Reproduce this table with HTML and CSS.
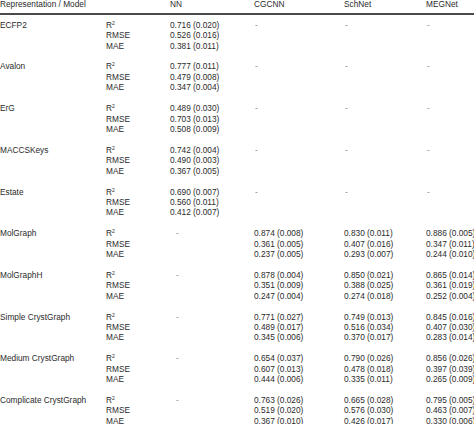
FILE: index.html
```html
<!DOCTYPE html>
<html>
<head>
<meta charset="utf-8">
<link rel="stylesheet" href="styles.css">
</head>
<body>
<div class="table">
  <div class="row head">
    <div class="c c1">Representation / Model</div>
    <div class="c c2"></div>
    <div class="c c3">NN</div>
    <div class="c c4">CGCNN</div>
    <div class="c c5">SchNet</div>
    <div class="c c6">MEGNet</div>
  </div>
  <div class="rule"></div>
  <div class="body">
    <div class="row group">
      <div class="c c1">ECFP2</div>
      <div class="c c2"><div>R<sup>2</sup></div><div>RMSE</div><div>MAE</div></div>
      <div class="c c3"><div>0.716 (0.020)</div><div>0.526 (0.016)</div><div>0.381 (0.011)</div></div>
      <div class="c c4"><div class="dash">-</div></div>
      <div class="c c5"><div class="dash">-</div></div>
      <div class="c c6"><div class="dash">-</div></div>
    </div>
    <div class="row group">
      <div class="c c1">Avalon</div>
      <div class="c c2"><div>R<sup>2</sup></div><div>RMSE</div><div>MAE</div></div>
      <div class="c c3"><div>0.777 (0.011)</div><div>0.479 (0.008)</div><div>0.347 (0.004)</div></div>
      <div class="c c4"><div class="dash">-</div></div>
      <div class="c c5"><div class="dash">-</div></div>
      <div class="c c6"><div class="dash">-</div></div>
    </div>
    <div class="row group">
      <div class="c c1">ErG</div>
      <div class="c c2"><div>R<sup>2</sup></div><div>RMSE</div><div>MAE</div></div>
      <div class="c c3"><div>0.489 (0.030)</div><div>0.703 (0.013)</div><div>0.508 (0.009)</div></div>
      <div class="c c4"><div class="dash">-</div></div>
      <div class="c c5"><div class="dash">-</div></div>
      <div class="c c6"><div class="dash">-</div></div>
    </div>
    <div class="row group">
      <div class="c c1">MACCSKeys</div>
      <div class="c c2"><div>R<sup>2</sup></div><div>RMSE</div><div>MAE</div></div>
      <div class="c c3"><div>0.742 (0.004)</div><div>0.490 (0.003)</div><div>0.367 (0.005)</div></div>
      <div class="c c4"><div class="dash">-</div></div>
      <div class="c c5"><div class="dash">-</div></div>
      <div class="c c6"><div class="dash">-</div></div>
    </div>
    <div class="row group">
      <div class="c c1">Estate</div>
      <div class="c c2"><div>R<sup>2</sup></div><div>RMSE</div><div>MAE</div></div>
      <div class="c c3"><div>0.690 (0.007)</div><div>0.560 (0.011)</div><div>0.412 (0.007)</div></div>
      <div class="c c4"><div class="dash">-</div></div>
      <div class="c c5"><div class="dash">-</div></div>
      <div class="c c6"><div class="dash">-</div></div>
    </div>
    <div class="row group">
      <div class="c c1">MolGraph</div>
      <div class="c c2"><div>R<sup>2</sup></div><div>RMSE</div><div>MAE</div></div>
      <div class="c c3"><div class="dash nn">-</div></div>
      <div class="c c4"><div>0.874 (0.008)</div><div>0.361 (0.005)</div><div>0.237 (0.005)</div></div>
      <div class="c c5"><div>0.830 (0.011)</div><div>0.407 (0.016)</div><div>0.293 (0.007)</div></div>
      <div class="c c6"><div>0.886 (0.005)</div><div>0.347 (0.011)</div><div>0.244 (0.010)</div></div>
    </div>
    <div class="row group">
      <div class="c c1">MolGraphH</div>
      <div class="c c2"><div>R<sup>2</sup></div><div>RMSE</div><div>MAE</div></div>
      <div class="c c3"><div class="dash nn">-</div></div>
      <div class="c c4"><div>0.878 (0.004)</div><div>0.351 (0.009)</div><div>0.247 (0.004)</div></div>
      <div class="c c5"><div>0.850 (0.021)</div><div>0.388 (0.025)</div><div>0.274 (0.018)</div></div>
      <div class="c c6"><div>0.865 (0.014)</div><div>0.361 (0.019)</div><div>0.252 (0.004)</div></div>
    </div>
    <div class="row group">
      <div class="c c1">Simple CrystGraph</div>
      <div class="c c2"><div>R<sup>2</sup></div><div>RMSE</div><div>MAE</div></div>
      <div class="c c3"><div class="dash nn">-</div></div>
      <div class="c c4"><div>0.771 (0.027)</div><div>0.489 (0.017)</div><div>0.345 (0.006)</div></div>
      <div class="c c5"><div>0.749 (0.013)</div><div>0.516 (0.034)</div><div>0.370 (0.017)</div></div>
      <div class="c c6"><div>0.845 (0.016)</div><div>0.407 (0.030)</div><div>0.283 (0.014)</div></div>
    </div>
    <div class="row group">
      <div class="c c1">Medium CrystGraph</div>
      <div class="c c2"><div>R<sup>2</sup></div><div>RMSE</div><div>MAE</div></div>
      <div class="c c3"><div class="dash nn">-</div></div>
      <div class="c c4"><div>0.654 (0.037)</div><div>0.607 (0.013)</div><div>0.444 (0.006)</div></div>
      <div class="c c5"><div>0.790 (0.026)</div><div>0.478 (0.018)</div><div>0.335 (0.011)</div></div>
      <div class="c c6"><div>0.856 (0.026)</div><div>0.397 (0.039)</div><div>0.265 (0.009)</div></div>
    </div>
    <div class="row group">
      <div class="c c1">Complicate CrystGraph</div>
      <div class="c c2"><div>R<sup>2</sup></div><div>RMSE</div><div>MAE</div></div>
      <div class="c c3"><div class="dash nn">-</div></div>
      <div class="c c4"><div>0.763 (0.026)</div><div>0.519 (0.020)</div><div>0.367 (0.010)</div></div>
      <div class="c c5"><div>0.665 (0.028)</div><div>0.576 (0.030)</div><div>0.426 (0.017)</div></div>
      <div class="c c6"><div>0.795 (0.005)</div><div>0.463 (0.007)</div><div>0.330 (0.006)</div></div>
    </div>
  </div>
</div>
</body>
</html>
```
FILE: styles.css
```css
html, body {
  margin: 0;
  padding: 0;
  background: #ffffff;
  overflow: hidden;
}
body {
  width: 474px;
  height: 424px;
}
.table {
  font-family: "Liberation Sans", Arial, Helvetica, sans-serif;
  font-size: 8.3px;
  line-height: 10.417px;
  color: #2b2b2b;
  margin-top: -1px;
}
.row {
  display: grid;
  grid-template-columns: 106px 64px 84px 90px 82px 1fr;
  white-space: nowrap;
}
.head {
  padding-bottom: 3.6px;
}
.rule {
  height: 2px;
  background: #4a4a4a;
}
.body {
  padding-top: 4.8px;
}
.group {
  padding-bottom: 10.417px;
}
.c1 {
  padding-left: 0;
}
sup {
  font-size: 5px;
  line-height: 0;
  vertical-align: 3px;
}
.dash {
  color: #8a8a8a;
  padding-left: 1px;
}
.dash.nn {
  padding-left: 6px;
}
```
